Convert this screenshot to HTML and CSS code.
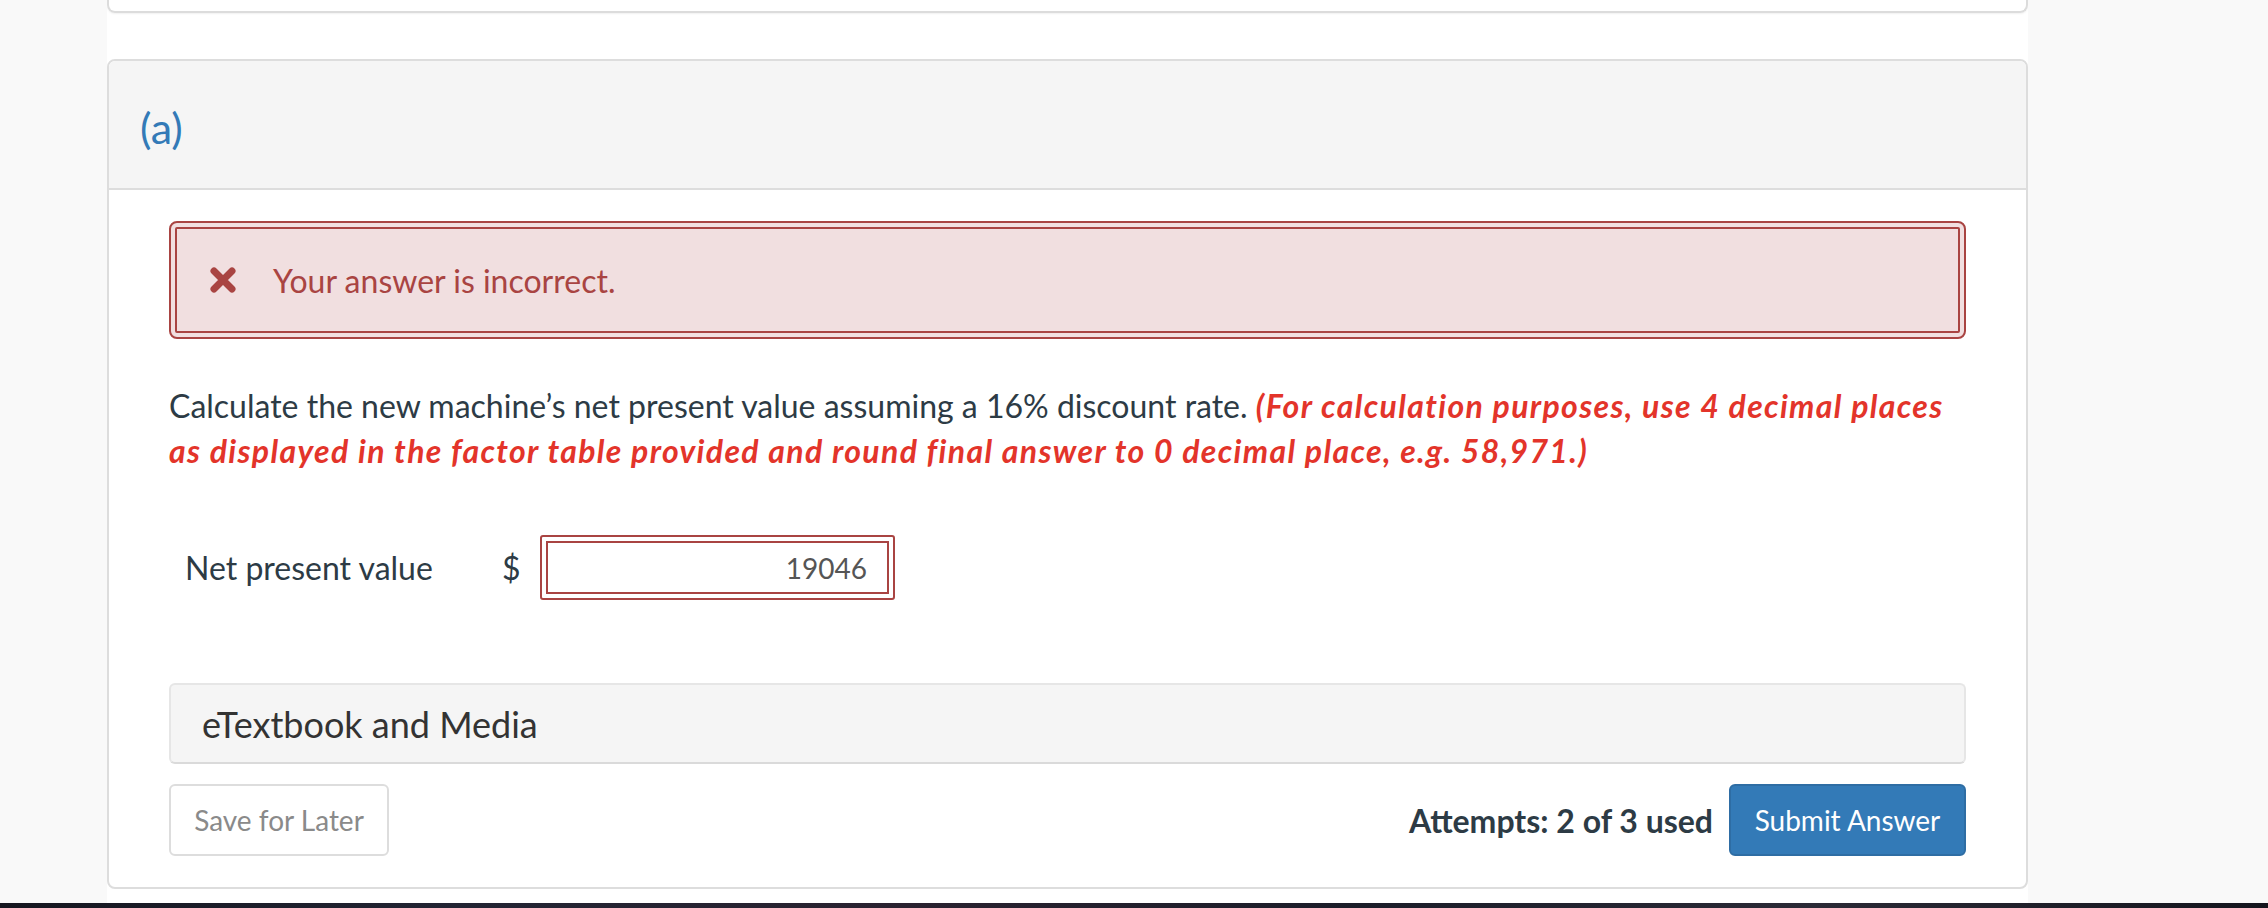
FILE: index.html
```html
<!DOCTYPE html>
<html lang="en">
<head>
<meta charset="utf-8">
<title>Question (a)</title>
<link rel="stylesheet" href="styles.css">
</head>
<body>
<div class="page">
  <div class="prev-card"></div>
  <section class="panel">
    <div class="panel-heading"><h3 class="part-title">(a)</h3></div>
    <div class="panel-body">
      <div class="alert">
        <div class="alert-inner">
          <svg class="x-icon" width="28" height="28" viewBox="0 0 28 28" aria-hidden="true">
            <path d="M5 5 L23 23 M23 5 L5 23" stroke="#a94442" stroke-width="7" stroke-linecap="round" fill="none"/>
          </svg>
          <span class="alert-text">Your answer is incorrect.</span>
        </div>
      </div>
      <p class="question">Calculate the new machine’s net present value assuming a 16% discount rate. <em class="hint">(For calculation purposes, use 4 decimal places as displayed in the factor table provided and round final answer to 0 decimal place, e.g. 58,971.)</em></p>
      <div class="answer-row">
        <span class="answer-label">Net present value</span>
        <span class="currency">$</span>
        <div class="input-outer"><div class="input-inner">19046</div></div>
      </div>
      <div class="media">eTextbook and Media</div>
      <div class="actions">
        <button class="btn btn-default">Save for Later</button>
        <div class="actions-right">
          <span class="attempts">Attempts: 2 of 3 used</span>
          <button class="btn btn-primary">Submit Answer</button>
        </div>
      </div>
    </div>
  </section>
</div>
<div class="taskbar"></div>
</body>
</html>
```
FILE: styles.css
```css
* { box-sizing: border-box; }
html, body {
  margin: 0;
  padding: 0;
}
body {
  background: #f9f9f9;
  height: 908px;
  overflow: hidden;
  font-family: Lato, "Liberation Sans", sans-serif;
  color: #2d3b45;
}
.page {
  margin-left: 107px;
  width: 1921px;
  height: 903px;
  background: #ffffff;
  overflow: hidden;
}
.prev-card {
  height: 13px;
  border: 2px solid #dcdcdc;
  border-top: none;
  border-radius: 0 0 8px 8px;
  box-shadow: 0 1px 2px rgba(0,0,0,0.06);
}
.panel {
  margin-top: 46px;
  border: 2px solid #dddddd;
  border-radius: 8px;
  overflow: hidden;
}
.panel-heading {
  height: 129px;
  background: #f5f5f5;
  border-bottom: 2px solid #dddddd;
  display: flex;
  align-items: center;
  padding: 6px 30px 0 31px;
}
.part-title {
  margin: 0;
  font-size: 43px;
  font-weight: 400;
  color: #337ab7;
  line-height: 1;
}
.panel-body {
  padding: 31px 60px 31px 60px;
}
.alert {
  height: 118px;
  border: 2px solid #a94442;
  border-radius: 8px;
  padding: 4px;
  background: #f1dfe0;
}
.alert-inner {
  height: 100%;
  border: 2px solid #a94442;
  border-radius: 2px;
  display: flex;
  align-items: center;
  padding-left: 32px;
  color: #a94442;
  font-size: 32px;
}
.x-icon {
  flex: none;
  margin-right: 36px;
}
.question {
  margin: 44px 0 0 0;
  font-size: 32px;
  line-height: 45px;
  color: #2d3b45;
}
.hint {
  font-family: Lato, "Liberation Sans", sans-serif;
  font-style: italic;
  font-weight: 700;
  color: #e3342a;
  font-size: 32px;
  letter-spacing: 1.35px;
}
.answer-row {
  margin-top: 62px;
  display: flex;
  align-items: center;
  height: 65px;
  font-size: 32px;
  color: #2d3b45;
}
.answer-label {
  width: 333px;
  padding-left: 16px;
}
.currency {
  width: 38px;
}
.input-outer {
  width: 355px;
  height: 65px;
  border: 2px solid #a94442;
  border-radius: 3px;
  padding: 4px;
}
.input-inner {
  height: 100%;
  border: 2px solid #a94442;
  display: flex;
  align-items: center;
  justify-content: flex-end;
  padding-right: 20px;
  font-size: 28px;
  color: #555555;
}
.media {
  margin-top: 83px;
  height: 81px;
  background: #f5f5f5;
  border: 2px solid #e6e6e6;
  border-bottom-color: #dadada;
  border-radius: 6px;
  display: flex;
  align-items: center;
  padding-left: 31px;
  font-size: 36px;
  color: #333333;
}
.actions {
  margin-top: 20px;
  display: flex;
  align-items: center;
  justify-content: space-between;
}
.actions-right {
  display: flex;
  align-items: center;
  gap: 16px;
}
.btn {
  height: 72px;
  border-radius: 6px;
  font-family: Lato, "Liberation Sans", sans-serif;
  font-size: 28px;
  padding: 0;
  cursor: pointer;
}
.btn-default {
  width: 220px;
  background: #ffffff;
  border: 2px solid #dddddd;
  color: #8a8a8a;
}
.btn-primary {
  width: 237px;
  background: #337ab7;
  border: 2px solid #2e6da4;
  color: #ffffff;
}
.attempts {
  font-weight: 700;
  font-size: 32px;
  color: #2d3b45;
}
.taskbar {
  height: 5px;
  background: linear-gradient(90deg, #15161f 0%, #222433 20%, #2a2230 40%, #1b1d29 60%, #2b2a36 80%, #14151d 100%);
}
```
